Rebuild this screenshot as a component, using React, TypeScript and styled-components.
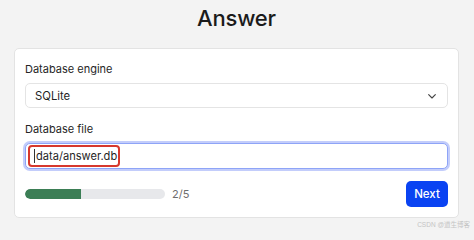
import React from "react";
import styled, { createGlobalStyle } from "styled-components";

const Global = createGlobalStyle`
  html, body { margin: 0; padding: 0; }
  body {
    background: #f3f3f3;
    font-family: Inter, "Liberation Sans", "Noto Sans CJK SC", sans-serif;
    color: #1f1f1f;
    -webkit-font-smoothing: antialiased;
  }
  * { box-sizing: border-box; }
`;

const Page = styled.div`
  width: 474px;
  height: 233px;
  position: relative;
  overflow: hidden;
  display: flex;
  flex-direction: column;
  align-items: stretch;
  padding: 5px 15px 0 14px;
`;

const Title = styled.h1`
  margin: 0 0 17px;
  height: 26px;
  line-height: 26px;
  font-size: 22px;
  font-weight: 500;
  text-align: center;
  color: #1b1b1b;
  letter-spacing: -0.2px;
`;

const Card = styled.div`
  background: #ffffff;
  border: 1px solid #e3e3e3;
  border-radius: 5px;
  padding: 13px 10px 10px 10px;
  display: flex;
  flex-direction: column;
`;

const Field = styled.div<{ $gapTop?: number }>`
  display: flex;
  flex-direction: column;
  gap: 7px;
  margin-top: ${(p) => p.$gapTop ?? 0}px;
`;

const Label = styled.label`
  font-size: 11px;
  line-height: 14px;
  height: 14px;
  color: #262626;
`;

const SelectBox = styled.div`
  height: 25px;
  border: 1px solid #e4e4e4;
  border-radius: 5px;
  display: flex;
  align-items: center;
  justify-content: space-between;
  padding: 0 7px 0 9px;
  font-size: 11.3px;
  color: #1f1f1f;
  background: #fff;
`;

const InputWrap = styled.div`
  position: relative;
  height: 26px;
`;

const TextInput = styled.input`
  width: 100%;
  height: 26px;
  border: 1px solid #8ea4f7;
  border-radius: 5px;
  box-shadow: 0 0 0 2px #c3cdfb;
  padding: 0 9px 0 10px;
  font-family: inherit;
  font-size: 11.1px;
  color: #1f1f1f;
  outline: none;
  background: #fff;
`;

const Caret = styled.span`
  position: absolute;
  left: 9px;
  top: 6px;
  width: 1px;
  height: 14px;
  background: #333;
`;

const Annotation = styled.span`
  position: absolute;
  left: 3px;
  top: 2px;
  width: 92px;
  height: 22px;
  border: 2px solid #d7382d;
  border-radius: 4px;
  pointer-events: none;
`;

const Footer = styled.div`
  margin-top: 12px;
  height: 26px;
  display: flex;
  align-items: center;
  justify-content: space-between;
`;

const ProgressGroup = styled.div`
  display: flex;
  align-items: center;
  gap: 7px;
`;

const Track = styled.div`
  width: 140px;
  height: 10px;
  border-radius: 5px;
  background: #e7e8eb;
  overflow: hidden;
`;

const Fill = styled.div`
  height: 100%;
  background: #3b7e55;
  border-radius: 5px 0 0 5px;
`;

const Count = styled.span`
  font-size: 11px;
  color: #6e6e6e;
`;

const NextButton = styled.button`
  width: 42px;
  height: 26px;
  border: none;
  border-radius: 5px;
  background: #0a43f2;
  color: #fff;
  font-family: inherit;
  font-size: 11.5px;
  font-weight: 500;
  padding: 0;
`;

const Watermark = styled.span`
  position: absolute;
  right: 4px;
  bottom: 4px;
  font-size: 6.5px;
  color: #c4c4c4;
  font-family: "Liberation Sans", "Noto Sans CJK SC", sans-serif;
`;

const Chevron = () => (
  <svg width="16" height="16" viewBox="0 0 24 24" fill="none" stroke="#444" strokeWidth="1.7" strokeLinecap="round" strokeLinejoin="round">
    <path d="M7 10l5 5 5-5" />
  </svg>
);

export default function App() {
  const step = 2;
  const total = 5;
  return (
    <>
      <Global />
      <Page>
        <Title>Answer</Title>
        <Card>
          <Field>
            <Label>Database engine</Label>
            <SelectBox>
              <span>SQLite</span>
              <Chevron />
            </SelectBox>
          </Field>
          <Field $gapTop={14}>
            <Label>Database file</Label>
            <InputWrap>
              <TextInput defaultValue="data/answer.db" readOnly />
              <Caret />
              <Annotation />
            </InputWrap>
          </Field>
          <Footer>
            <ProgressGroup>
              <Track>
                <Fill style={{ width: `${(step / total) * 100}%` }} />
              </Track>
              <Count>
                {step}/{total}
              </Count>
            </ProgressGroup>
            <NextButton>Next</NextButton>
          </Footer>
        </Card>
        <Watermark>CSDN @道生博客</Watermark>
      </Page>
    </>
  );
}
